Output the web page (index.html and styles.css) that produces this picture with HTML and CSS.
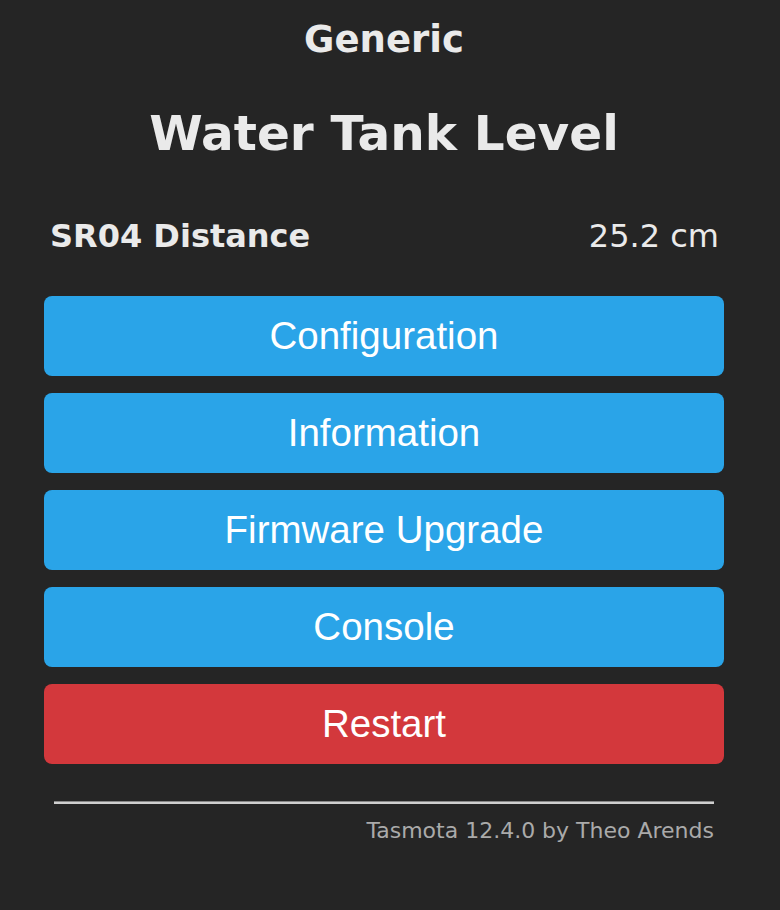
FILE: index.html
```html
<!DOCTYPE html>
<html>
<head>
<meta charset="utf-8">
<link rel="stylesheet" href="styles.css">
</head>
<body>
<div class="wrap">
  <h3 class="dev">Generic</h3>
  <h2 class="title">Water Tank Level</h2>
  <div class="sensor">
    <span class="label">SR04 Distance</span>
    <span class="value">25.2 cm</span>
  </div>
  <div class="buttons">
    <button class="btn">Configuration</button>
    <button class="btn">Information</button>
    <button class="btn">Firmware Upgrade</button>
    <button class="btn">Console</button>
    <button class="btn red">Restart</button>
  </div>
  <div class="foot">
    <div class="rule"></div>
    <div class="credit">Tasmota 12.4.0 by Theo Arends</div>
  </div>
</div>
</body>
</html>
```
FILE: styles.css
```css
html, body {
  margin: 0;
  padding: 0;
  background: #252525;
  color: #eaeaea;
  font-family: "DejaVu Sans", Verdana, sans-serif;
}
.wrap {
  width: 680px;
  margin-left: 44px;
}
.dev {
  margin: 0;
  padding-top: 18px;
  text-align: center;
  font-size: 37px;
  line-height: 44px;
  font-weight: bold;
}
.title {
  margin: 0;
  padding-top: 41px;
  text-align: center;
  font-size: 48.5px;
  line-height: 60px;
  font-weight: bold;
}
.sensor {
  display: flex;
  justify-content: space-between;
  padding: 0 5px 0 6px;
  margin-top: 53px;
  font-size: 32px;
  line-height: 40px;
}
.label { font-weight: bold; }
.buttons {
  display: flex;
  flex-direction: column;
  gap: 17px;
  margin-top: 40px;
}
.btn {
  display: block;
  width: 680px;
  height: 80px;
  border: 0;
  border-radius: 8px;
  background: #2aa4e8;
  color: #fff;
  font-family: "Liberation Sans", Arial, sans-serif;
  font-size: 38.5px;
  padding: 0;
}
.btn.red { background: #d3383c; }
.foot {
  padding: 0 10px;
  margin-top: 37px;
}
.rule {
  height: 3px;
  background: #cfcfcf;
  border-top: 1px solid #888;
  box-sizing: border-box;
}
.credit {
  text-align: right;
  margin-top: 12px;
  font-size: 22px;
  line-height: 30px;
  color: #aaaaaa;
}
```
